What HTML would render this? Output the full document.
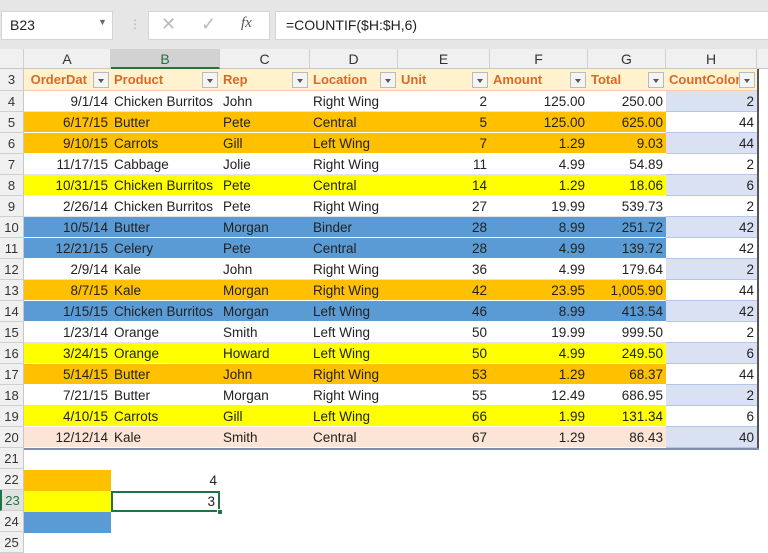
<!DOCTYPE html><html><head><style>
*{margin:0;padding:0;box-sizing:border-box}
body{width:768px;height:547px;background:#fff;font-family:"Liberation Sans",sans-serif;font-size:13.5px;color:#222;position:relative;overflow:hidden}
.top{position:absolute;left:0;top:0;width:768px;height:49px;background:#e6e6e6}
.box{position:absolute;top:11px;height:29px;background:#fff;border:1px solid #d4d4d4}
.ch{position:absolute;top:49px;height:20px;background:#f0f0f0;border-right:1px solid #d0d0d0;border-bottom:1px solid #c8c8c8;text-align:center;font-size:14px;line-height:20px;color:#333}
.rh{position:absolute;left:0;width:24px;height:21px;background:#f0f0f0;border-bottom:1px solid #d0d0d0;border-right:1px solid #c8c8c8;text-align:center;font-size:13px;line-height:21px;color:#333}
.c{position:absolute;height:21px;line-height:21px;padding:0 3px;white-space:nowrap;overflow:hidden;border-bottom:1px solid #e4e4e4}
.r{text-align:right}
.hd{background:#fff2cc;color:#d9692a;font-weight:bold;font-size:13px;height:22px;line-height:22px;border-bottom:1px solid #f8cbad}
.dd{position:absolute;right:2px;top:3px;width:16px;height:16px;background:#f4f4f4;border:1px solid #bbb;}
.dd:after{content:"";position:absolute;left:4px;top:6px;border-left:3.5px solid transparent;border-right:3.5px solid transparent;border-top:4px solid #555}
</style></head><body>
<div class="top"></div>
<div class="box" style="left:1px;width:112px"><span style="position:absolute;left:8px;top:5px;font-size:14px">B23</span><span style="position:absolute;left:96px;top:5px;font-size:9px;color:#666">▼</span></div>
<div style="position:absolute;left:129px;top:17px;color:#aaa;font-size:12px">⋮</div>
<div class="box" style="left:148px;width:122px;color:#bbb;font-size:18px"><span style="position:absolute;left:12px;top:2px">✕</span><span style="position:absolute;left:52px;top:2px">✓</span><span style="position:absolute;left:92px;top:3px;color:#555;font-family:'Liberation Serif',serif;font-style:italic;font-size:15px">fx</span></div>
<div class="box" style="left:275px;width:500px"><span style="position:absolute;left:10px;top:5px;font-size:14px">=COUNTIF($H:$H,6)</span></div>
<div class="ch" style="left:0;width:24px"></div>
<div id="g"></div>
<script>
var cols=[[24,87,'A'],[111,109,'B'],[220,90,'C'],[310,88,'D'],[398,92,'E'],[490,98,'F'],[588,78,'G'],[666,91,'H']];
var h='';
cols.forEach(function(c){h+='<div class="ch" style="left:'+c[0]+'px;width:'+c[1]+'px;'+(c[2]=='B'?'background:#d2d2d2;color:#217346;border-bottom:2px solid #217346':'')+'">'+c[2]+'</div>'});
h+='<div class="ch" style="left:757px;width:20px"></div>';
var heads=['OrderDat','Product','Rep','Location','Unit','Amount','Total','CountColor'];
h+='<div class="rh" style="top:69px;height:22px;line-height:22px">3</div>';
cols.forEach(function(c,i){h+='<div class="c hd" style="left:'+c[0]+'px;width:'+c[1]+'px;top:69px;'+(i==0?'text-align:right;padding-right:24px':'')+'">'+heads[i]+'<span class="dd"></span></div>'});
var O='#ffc000',Y='#ffff00',B='#5b9bd5',W='#fff',P='#fce4d6';
var d=[
['9/1/14','Chicken Burritos','John','Right Wing',2,'125.00','250.00',2,W],
['6/17/15','Butter','Pete','Central',5,'125.00','625.00',44,O],
['9/10/15','Carrots','Gill','Left Wing',7,'1.29','9.03',44,O],
['11/17/15','Cabbage','Jolie','Right Wing',11,'4.99','54.89',2,W],
['10/31/15','Chicken Burritos','Pete','Central',14,'1.29','18.06',6,Y],
['2/26/14','Chicken Burritos','Pete','Right Wing',27,'19.99','539.73',2,W],
['10/5/14','Butter','Morgan','Binder',28,'8.99','251.72',42,B],
['12/21/15','Celery','Pete','Central',28,'4.99','139.72',42,B],
['2/9/14','Kale','John','Right Wing',36,'4.99','179.64',2,W],
['8/7/15','Kale','Morgan','Right Wing',42,'23.95','1,005.90',44,O],
['1/15/15','Chicken Burritos','Morgan','Left Wing',46,'8.99','413.54',42,B],
['1/23/14','Orange','Smith','Left Wing',50,'19.99','999.50',2,W],
['3/24/15','Orange','Howard','Left Wing',50,'4.99','249.50',6,Y],
['5/14/15','Butter','John','Right Wing',53,'1.29','68.37',44,O],
['7/21/15','Butter','Morgan','Right Wing',55,'12.49','686.95',2,W],
['4/10/15','Carrots','Gill','Left Wing',66,'1.99','131.34',6,Y],
['12/12/14','Kale','Smith','Central',67,'1.29','86.43',40,P]];
d.forEach(function(r,i){var t=91+i*21;var n=i+4;
h+='<div class="rh" style="top:'+t+'px">'+n+'</div>';
var bc=r[8]==W?'#e4e4e4':'#fff';
for(var j=0;j<7;j++){var c=cols[j];h+='<div class="c'+((j==0||j>=4)?' r':'')+'" style="left:'+c[0]+'px;width:'+c[1]+'px;top:'+t+'px;background:'+r[8]+';border-bottom-color:'+bc+'">'+r[j]+'</div>';}
h+='<div class="c r" style="left:666px;width:91px;top:'+t+'px;background:'+(n%2==0?'#d9e1f2':'#fff')+';border-bottom-color:#b4c6e7">'+r[7]+'</div>';
});
h+='<div style="position:absolute;left:757px;top:69px;width:2px;height:380px;background:#555"></div>';
h+='<div style="position:absolute;left:24px;top:448px;width:735px;height:1.5px;background:#7f8fa9"></div>';
for(var n=21;n<=25;n++){var t=448+(n-21)*21;h+='<div class="rh" style="top:'+t+'px;'+(n==23?'border-left:2px solid #217346;color:#217346;background:#e1e1e1':'')+'">'+n+'</div>';}
h+='<div style="position:absolute;left:24px;top:470px;width:87px;height:21px;background:#ffc000"></div>';
h+='<div style="position:absolute;left:24px;top:491px;width:87px;height:21px;background:#ffff00"></div>';
h+='<div style="position:absolute;left:24px;top:512px;width:87px;height:21px;background:#5b9bd5"></div>';
h+='<div class="c r" style="left:111px;width:109px;top:470px;border:none">4</div>';
h+='<div class="c r" style="left:111px;width:109px;top:491px;border:2px solid #217346;line-height:17px">3</div>';
h+='<div style="position:absolute;left:217px;top:509px;width:6px;height:6px;background:#217346;border:1px solid #fff"></div>';
document.getElementById('g').innerHTML=h;
</script>
</body></html>
